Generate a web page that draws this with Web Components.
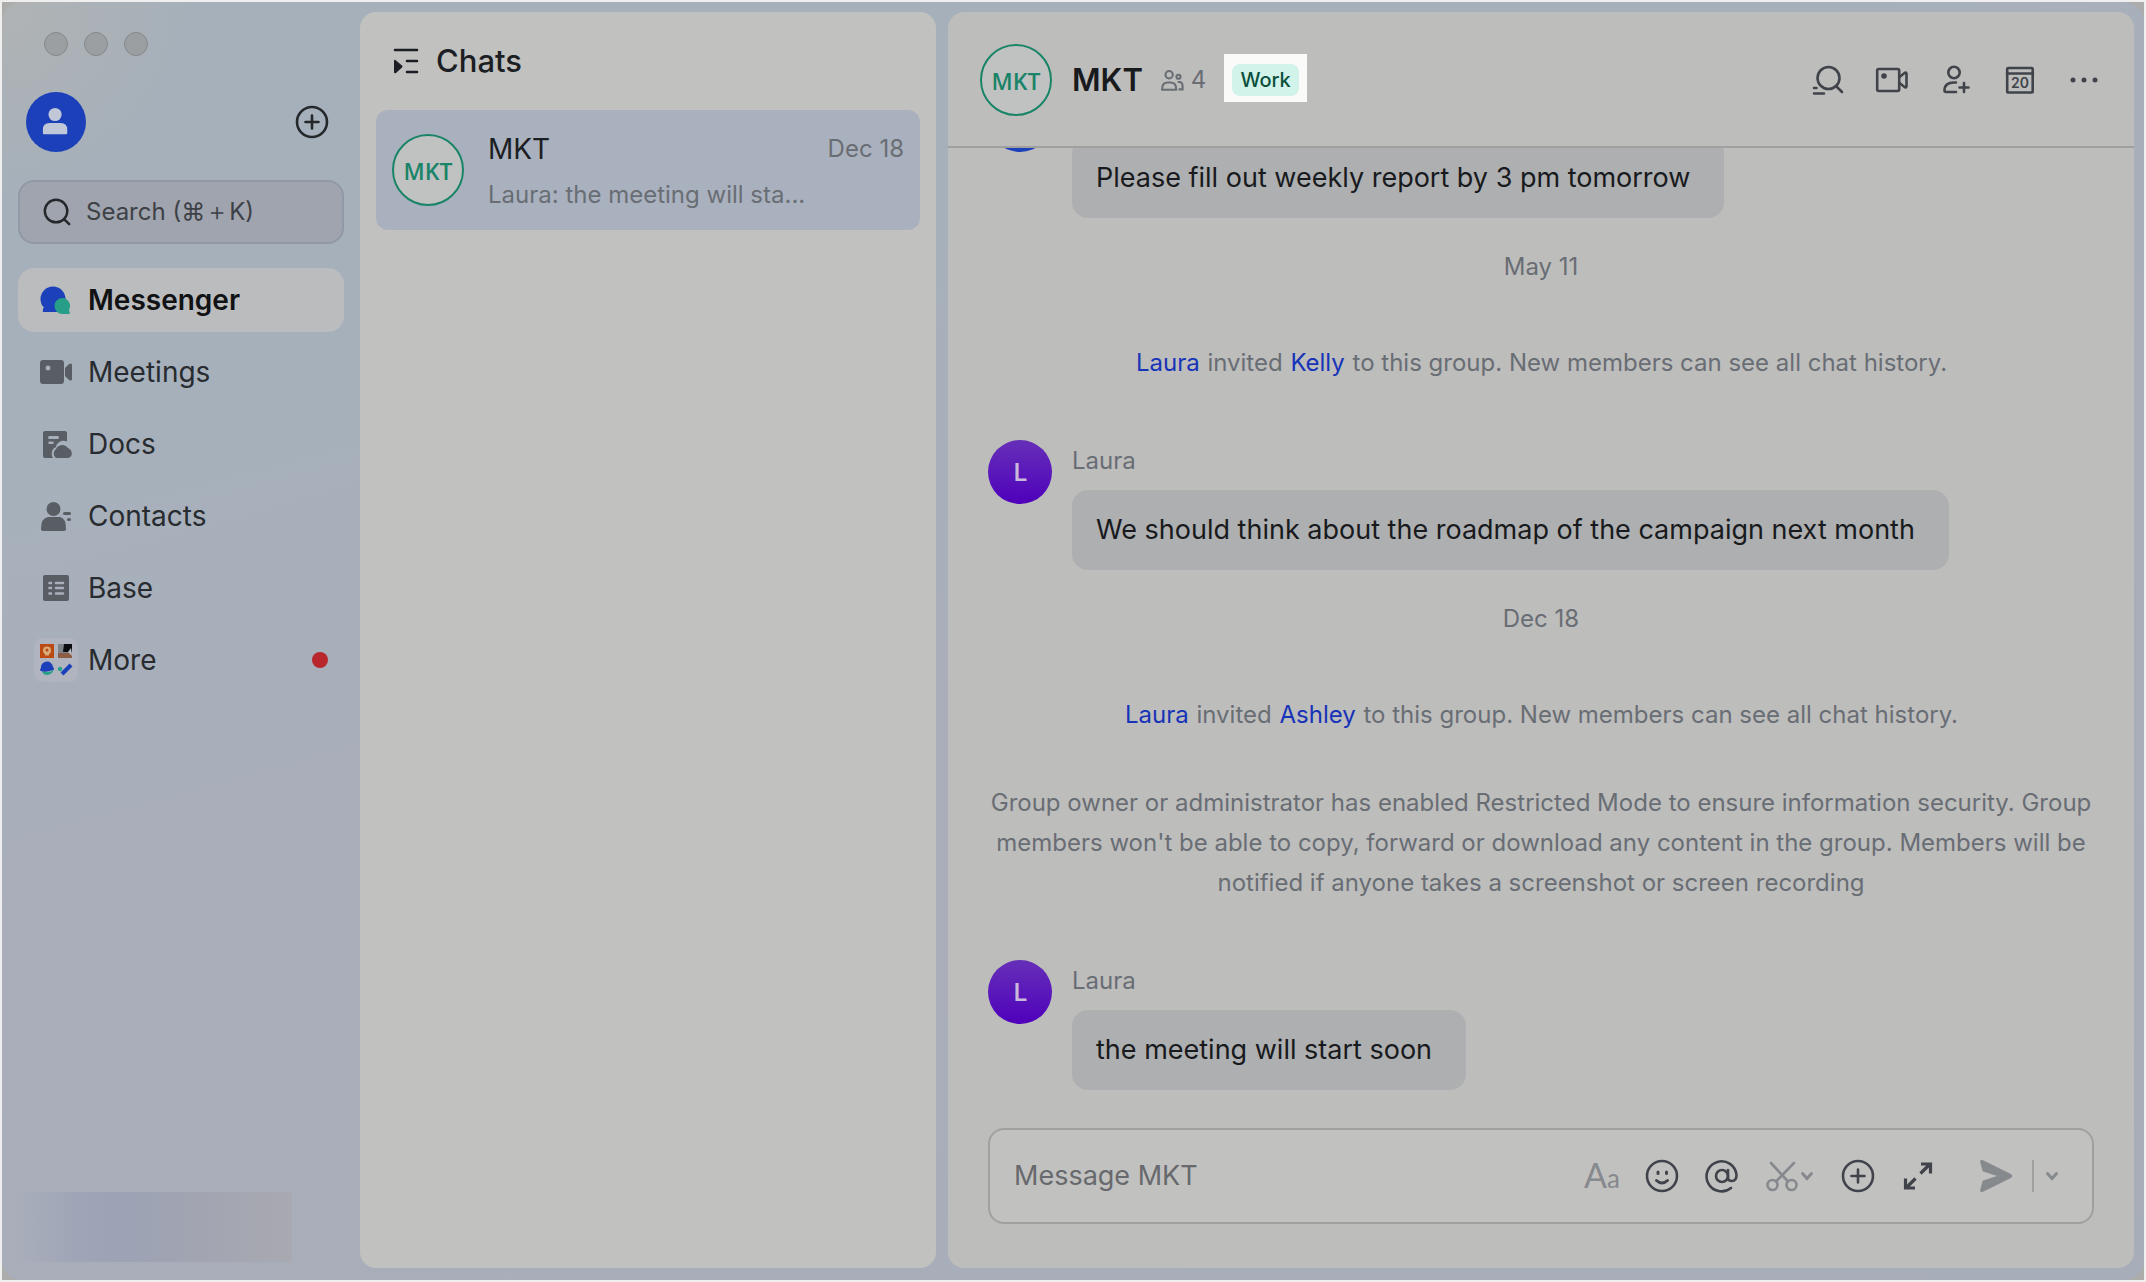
<!DOCTYPE html>
<html lang="en">
<head>
<meta charset="utf-8">
<title>Messenger</title>
<style>
html { height: 100%; background: #efefef; }
body {
    height: 100%;
    margin: 0;
    box-sizing: border-box;
    padding: 2px;
    background: #acacaa content-box;
    font-family: Inter, "Liberation Sans", sans-serif;
    font-size: 24px;
    line-height: 40px;
    color: #181a1d;
    --muted: #696d74;
    --icon: #40444a;
    --faint: #86898d;
    --line: #a0a09f;
    --link: #1733b8;
    --green: #1a8468;
}
</style>
</head>
<body>
<chat-app></chat-app>

<script>
const icons = {
    plus: '<circle cx="16" cy="16" r="15"/><path d="M16 9.500v13M9.500 16h13"/>',
    search: '<circle cx="15" cy="15" r="12"/><path d="M23.500 23.500l5.500 5.500"/>',
    messenger: '<g stroke="none"><circle cx="13" cy="15" r="12.500" fill="#1c3fba"/><path fill="#1c3fba" d="M3 24h14v4H4q-2 0-1-2z"/><path fill="#279e87" d="M22.500 14a8 8 0 1 0 0 16h6q2 0 1-2l-.5-2A8 8 0 0 0 22.500 14z"/></g>',
    meetings: '<g fill="currentColor" stroke="none"><path fill-rule="evenodd" d="M3 4h18a3 3 0 0 1 3 3v18a3 3 0 0 1-3 3H3a3 3 0 0 1-3-3V7a3 3 0 0 1 3-3zm5 5.500a2.500 2.500 0 1 0 .01 0z"/><path d="M25 12l4-4q3-1.500 3 1v14q0 2.500-3 1l-4-4z"/></g>',
    docs: '<g stroke="none" fill="currentColor"><path fill-rule="evenodd" d="M5 3h20a2 2 0 0 1 2 2v8.500c-5-2-10 .5-11 5.500-4 1.500-5.500 7-3 11H5a2 2 0 0 1-2-2V5a2 2 0 0 1 2-2zm4.500 5a1 1 0 0 0 0 3h8a1 1 0 0 0 0-3zm0 5.500a1 1 0 0 0 0 2.500h3a1 1 0 0 0 0-2.500z"/><path d="M16 30a5.500 5.500 0 0 1 0-9 7 7 0 0 1 12-1c5 2 5 9 .5 10z"/></g>',
    contacts: '<g stroke="none" fill="currentColor"><circle cx="13.500" cy="9" r="7"/><path d="M8 17h12q6 1 6 12 0 2-2 2H3q-2 0-2-2 0-11 7-12z"/><rect x="23" y="12" width="8" height="3" rx="1.500"/><rect x="27" y="18" width="4" height="3" rx="1.500"/></g>',
    base: '<path fill="currentColor" stroke="none" fill-rule="evenodd" d="M5 3h22a2 2 0 0 1 2 2v22a2 2 0 0 1-2 2H5a2 2 0 0 1-2-2V5a2 2 0 0 1 2-2z"/><path stroke="#a9b0bb" d="M9.500 11h1.500M16 11h7M9.500 16h1.500M16 16h7M9.500 21.500h1.500M16 21.500h7"/>',
    more: '<g stroke="none"><path fill="#bb4a13" d="M0 0h14v14H0z"/><circle cx="7" cy="6.500" r="4" fill="#d8ab78"/><path fill="#d8ab78" d="M5 9h4v2.500H5z"/><circle cx="7" cy="6" r="1.500" fill="#bb4a13"/><path fill="#7f8489" d="M18 0h14v14H18z"/><path fill="#0c0d10" d="M24 0h8v8h-9z"/><path fill="#8c5c45" d="M18 9h14v5H18z"/><path fill="#b9bcc0" d="M28 8l3-4 1 8z"/><path fill="#27a18a" d="M2 27q10 3 12-3-1 7-7 7-4 0-5-4z"/><path fill="#1c3fba" d="M1 24a6 6 0 0 1 12-1q2 2 0 3-7 3-12 1-2-1 0-3z"/><circle cx="20" cy="25" r="2.200" fill="#27a18a"/></g><path stroke="#1c3fba" stroke-width="4" stroke-linecap="butt" d="M22 30l9-9"/>',
    sidebar: '<path d="M5 5h22M17 16h10M17 27h10"/><path fill="currentColor" stroke="none" d="M4 16q0-2 2-.5l6 5q1 1 0 2l-6 5.500q-2 1-2-1z"/>',
    people: '<circle cx="12.500" cy="9.500" r="4.500"/><path d="M4 28v-2q0-7 7-7h3q7 0 7 7v2zM24 18.500h1q4 0 4 5v4h-4"/><circle cx="24" cy="12" r="2.500"/>',
    find: '<circle cx="16.500" cy="14" r="11"/><path d="M24 22l6 6M2 24h2.500M2 29.500h10"/>',
    video: '<rect x="1.200" y="5" width="22" height="22" rx="1.500"/><path d="M23.500 13l5-4q2-1 2 1v12q0 2-2 1l-5-4"/><circle cx="8" cy="12" r="2.800" fill="currentColor" stroke="none"/>',
    invite: '<circle cx="14" cy="8.500" r="5.700"/><path d="M16 18.500h-2q-9.500 0-9.500 8 0 1.500 1.500 1.500h10M24 19v9M19.500 23.500h9"/>',
    dots: '<g fill="currentColor" stroke="none"><circle cx="5" cy="16" r="2.500"/><circle cx="16" cy="16" r="2.500"/><circle cx="27" cy="16" r="2.500"/></g>',
    calendar: '<rect x="3.200" y="4" width="25.500" height="24.500" rx="1"/><path d="M3 9.500h26"/><text x="16" y="24" text-anchor="middle" font-family="Inter" font-weight="600" font-size="14" fill="currentColor" stroke="none">20</text>',
    smile: '<circle cx="16" cy="16" r="15"/><path stroke-width="3" d="M12 12v1.500M20.500 12v1.500M10.500 20.500q5.500 5 11 0"/>',
    at: '<circle cx="16" cy="16" r="6"/><path d="M22 10v8q0 3 4 3 4.500 0 4.500-6A15 15 0 1 0 25 28"/>',
    scissors: '<path d="M5 3l17 18.500M28 3L10 21.500"/><circle cx="6.500" cy="25" r="5"/><circle cx="25.500" cy="25" r="5"/>',
    chevron: '<path stroke-width="3" d="M11.500 13.500l4.500 5 4.500-5"/>',
    expand: '<path stroke-width="3.200" stroke-linecap="butt" d="M18.500 13.500L28 4M19 4h9.500v9.500M13.500 18.500L4 28M3.500 18.500V28H13"/>',
    send: '<path fill="currentColor" stroke-width="2" stroke-linejoin="round" d="M2 1q-1-.5-.8.700L3.500 10.500l14 4.500v2l-14 4.500L1.200 30.300q-.2 1.200.8.700l28.500-14q1.500-1 0-2z"/>',
    person: '<g fill="#bfc7d9" stroke="none"><circle cx="15" cy="8" r="7"/><path d="M2 28v-4q0-7 7-7h12q7 0 7 7v4q0 1-1 1H3q-1 0-1-1z"/></g>'
};

function define(name, html) {
    const template = document.createElement('template');
    template.innerHTML = html;
    customElements.define(name, class extends HTMLElement {
        constructor() {
            super();
            this.attachShadow({ mode: 'open' }).appendChild(template.content.cloneNode(true));
        }
    });
}

class ChatIcon extends HTMLElement {
    constructor() {
        super();
        this.attachShadow({ mode: 'open' });
    }

    connectedCallback() {
        this.shadowRoot.innerHTML = `
            <style>
            :host { display: block; flex: none; width: var(--size, 32px); height: var(--size, 32px); }
            svg { display: block; width: 100%; height: 100%; overflow: visible; }
            </style>
            <svg viewBox="0 0 32 32" fill="none" stroke="currentColor" stroke-width="2.600"
                stroke-linecap="round" aria-hidden="true">${icons[this.getAttribute('name')]}</svg>
        `;
    }
}
customElements.define('chat-icon', ChatIcon);

define('icon-button', `
    <style>
    :host { display: block; flex: none; }
    button { display: flex; align-items: center; margin: 0; padding: 0; border: 0; background: none; color: inherit; font: inherit; }
    </style>
    <button type="button"><slot></slot></button>
`);

define('group-avatar', `
    <style>
    :host {
        display: flex; flex: none; align-items: center; justify-content: center; box-sizing: border-box;
        width: 72px; height: 72px; padding-top: 2px; border: 2px solid var(--green); border-radius: 50%;
        background: #c0c1c1; color: var(--green); font: 600 23px/32px "Open Sans", sans-serif;
    }
    </style>
    <slot></slot>
`);

define('user-avatar', `
    <style>
    :host {
        display: flex; flex: none; align-items: center; justify-content: center; box-sizing: border-box;
        width: 64px; height: 64px; padding-bottom: 2px; border-radius: 50%;
        background: linear-gradient(#6630b8, #4f00bb); color: #c9b9dd; font: 600 26px/40px "Open Sans", sans-serif;
    }
    :host([plain]) { background: #1c3fba; }
    </style>
    <slot></slot>
`);

define('nav-item', `
    <style>
    :host { display: block; color: #282b2f; }
    a {
        display: flex; align-items: center; gap: 16px; height: 64px; padding: 0 16px 0 22px;
        border-radius: 16px; color: inherit; text-decoration: none; font-size: 28px;
    }
    :host([active]) { color: #111214; font-weight: 600; }
    :host([active]) a { background: #bbbcbe; }
    .icon { color: #595e65; }
    .label { flex: 1; }
    :host([tile]) .icon { margin: 0 -6px; padding: 6px; border-radius: 8px; background: #afb4be; }
    </style>
    <a href="#"><span class="icon"><slot name="icon"></slot></span><span class="label"><slot></slot></span><slot name="badge"></slot></a>
`);

define('side-bar', `
    <style>
    :host { display: flex; flex-direction: column; flex: none; width: 326px; padding: 30px 16px 18px; }
    .lights { display: flex; gap: 16px; padding-left: 26px; }
    .lights i { box-sizing: border-box; width: 24px; height: 24px; border: 1px solid #85888a; border-radius: 50%; background: #9b9fa1; }
    .me { display: flex; align-items: center; justify-content: space-between; margin-top: 36px; padding: 0 16px 0 8px; color: #25282b; }
    .face { display: flex; align-items: center; justify-content: center; width: 60px; height: 60px; border-radius: 50%; background: #1c3fba; --size: 30px; }
    label {
        display: flex; align-items: center; gap: 14px; box-sizing: border-box; height: 64px; margin-top: 28px;
        padding: 0 20px 0 22px; border: 2px solid #9299a6; border-radius: 16px; background: #9fa4af; color: #25282b;
    }
    label chat-icon { --size: 30px; }
    input { flex: 1; min-width: 0; padding: 0; border: 0; outline: 0; background: none; font: inherit; color: inherit; }
    input::placeholder { color: #3d4146; opacity: 1; }
    nav { display: flex; flex-direction: column; gap: 8px; margin-top: 24px; }
    .dot { width: 16px; height: 16px; border-radius: 50%; background: #b9272c; }
    .haze { width: 274px; height: 70px; margin-top: auto; background: linear-gradient(90deg, transparent, #9ea5b6 22%, #9ba3b5 36%, #a1a4b1 62%, #a8a9b1); }
    </style>
    <div class="lights"><i></i><i></i><i></i></div>
    <div class="me">
        <span class="face"><chat-icon name="person"></chat-icon></span>
        <icon-button><chat-icon name="plus"></chat-icon></icon-button>
    </div>
    <label><chat-icon name="search"></chat-icon><input type="text" aria-label="Search" placeholder="Search (⌘＋K)"></label>
    <nav>
        <nav-item active><chat-icon slot="icon" name="messenger"></chat-icon>Messenger</nav-item>
        <nav-item><chat-icon slot="icon" name="meetings"></chat-icon>Meetings</nav-item>
        <nav-item><chat-icon slot="icon" name="docs"></chat-icon>Docs</nav-item>
        <nav-item><chat-icon slot="icon" name="contacts"></chat-icon>Contacts</nav-item>
        <nav-item><chat-icon slot="icon" name="base"></chat-icon>Base</nav-item>
        <nav-item tile><chat-icon slot="icon" name="more"></chat-icon>More<i slot="badge" class="dot"></i></nav-item>
    </nav>
    <div class="haze"></div>
`);

define('chat-row', `
    <style>
    :host { display: flex; align-items: center; gap: 24px; height: 120px; padding: 0 16px; border-radius: 12px; background: #aab1be; }
    .text { flex: 1; min-width: 0; padding-top: 2px; }
    .top { display: flex; align-items: center; justify-content: space-between; line-height: 48px; }
    .name { font-size: 28px; color: #1b1e22; }
    .date, .last { color: var(--muted); }
    .last { line-height: 44px; padding-right: 80px; overflow: hidden; text-overflow: ellipsis; white-space: nowrap; }
    </style>
    <group-avatar>MKT</group-avatar>
    <div class="text">
        <div class="top"><span class="name"><slot name="name"></slot></span><span class="date"><slot name="date"></slot></span></div>
        <div class="last"><slot></slot></div>
    </div>
`);

define('chat-list', `
    <style>
    :host { display: block; flex: none; box-sizing: border-box; width: 576px; padding: 0 16px; border-radius: 16px; background: #c1c1c0; }
    header { display: flex; align-items: center; gap: 14px; height: 98px; padding-left: 14px; color: #1b1e22; }
    h2 { margin: 0; font-size: 31px; font-weight: 500; line-height: 40px; }
    </style>
    <header><icon-button><chat-icon name="sidebar"></chat-icon></icon-button><h2>Chats</h2></header>
    <chat-row><span slot="name">MKT</span><span slot="date">Dec 18</span>Laura: the meeting will sta...</chat-row>
`);

define('chat-header', `
    <style>
    :host {
        display: flex; align-items: center; flex: none; box-sizing: border-box; height: 136px;
        padding: 2px 34px 0 32px; border-bottom: 2px solid var(--line); color: var(--icon);
    }
    h1 { margin: 0 16px 0 20px; font-size: 31px; font-weight: 600; color: #181a1d; }
    .count { display: flex; align-items: center; gap: 6px; color: var(--muted); --size: 26px; }
    .spot { margin: 0 0 4px 18px; padding: 10px 8px 6px; background: #fafaf9; }
    .tag { display: block; padding: 0 8px; border-radius: 8px; background: #d2f3ea; color: #0c4f3c; font-size: 20px; font-weight: 500; line-height: 32px; }
    .tools { display: flex; gap: 32px; margin-left: auto; }
    </style>
    <group-avatar>MKT</group-avatar>
    <h1>MKT</h1>
    <span class="count"><chat-icon name="people"></chat-icon>4</span>
    <span class="spot"><span class="tag">Work</span></span>
    <div class="tools">
        <icon-button><chat-icon name="find"></chat-icon></icon-button>
        <icon-button><chat-icon name="video"></chat-icon></icon-button>
        <icon-button><chat-icon name="invite"></chat-icon></icon-button>
        <icon-button><chat-icon name="calendar"></chat-icon></icon-button>
        <icon-button><chat-icon name="dots"></chat-icon></icon-button>
    </div>
`);

define('chat-message', `
    <style>
    :host { display: flex; flex: none; align-items: flex-start; gap: 20px; }
    .name { min-height: 42px; margin-bottom: 8px; color: var(--muted); line-height: 42px; }
    .bubble { width: fit-content; padding: 20px 34px 20px 24px; border-radius: 16px; background: #aeafb0; font-size: 27px; }
    </style>
    <slot name="avatar"></slot>
    <div>
        <div class="name"><slot name="from"></slot></div>
        <div class="bubble"><slot></slot></div>
    </div>
`);

define('chat-note', `
    <style>
    :host { display: block; flex: none; margin-top: 56px; text-align: center; color: var(--muted); }
    :host([day]) { margin-top: 29px; }
    :host([notice]) { margin-top: 48px; }
    ::slotted(a) { margin: 0 1px; color: var(--link); text-decoration: none; }
    </style>
    <slot></slot>
`);

define('chat-log', `
    <style>
    :host { display: flex; flex: 1; flex-direction: column; justify-content: flex-end; min-height: 0; overflow: hidden; padding: 0 40px 38px; }
    chat-note + chat-message { margin-top: 57px; }
    </style>
    <chat-message><user-avatar plain slot="avatar"></user-avatar>Please fill out weekly report by 3 pm tomorrow</chat-message>
    <chat-note day>May 11</chat-note>
    <chat-note><a href="#">Laura</a> invited <a href="#">Kelly</a> to this group. New members can see all chat history.</chat-note>
    <chat-message><user-avatar slot="avatar">L</user-avatar><span slot="from">Laura</span>We should think about the roadmap of the campaign next month</chat-message>
    <chat-note day>Dec 18</chat-note>
    <chat-note><a href="#">Laura</a> invited <a href="#">Ashley</a> to this group. New members can see all chat history.</chat-note>
    <chat-note notice>Group owner or administrator has enabled Restricted Mode to ensure information security. Group members won't be able to copy, forward or download any content in the group. Members will be notified if anyone takes a screenshot or screen recording</chat-note>
    <chat-message><user-avatar slot="avatar">L</user-avatar><span slot="from">Laura</span>the meeting will start soon</chat-message>
`);

define('chat-composer', `
    <style>
    :host {
        display: flex; align-items: center; flex: none; gap: 28px; box-sizing: border-box; height: 96px; margin: 0 40px 44px;
        padding: 0 24px; border: 2px solid var(--line); border-radius: 16px; background: #c1c1c0; color: var(--icon);
    }
    input { flex: 1; min-width: 0; padding: 0; border: 0; outline: 0; background: none; font: inherit; font-size: 27px; color: inherit; }
    input::placeholder { color: #67696c; opacity: 1; }
    .faint { color: var(--faint); }
    .type { display: flex; align-items: baseline; margin-right: -2px; font: 34px/40px Lato, sans-serif; }
    .type small { font-size: 26px; }
    .cut { display: flex; align-items: center; }
    .cut chat-icon + chat-icon { margin: 0 -9px 0 -7px; }
    .send { margin-left: 18px; }
    .split { width: 2px; height: 32px; margin: 0 -26px 0 -8px; background: var(--line); }
    </style>
    <input type="text" aria-label="Message" placeholder="Message MKT">
    <icon-button class="faint"><span class="type">A<small>a</small></span></icon-button>
    <icon-button><chat-icon name="smile"></chat-icon></icon-button>
    <icon-button><chat-icon name="at"></chat-icon></icon-button>
    <icon-button class="faint"><span class="cut"><chat-icon name="scissors"></chat-icon><chat-icon name="chevron"></chat-icon></span></icon-button>
    <icon-button><chat-icon name="plus"></chat-icon></icon-button>
    <icon-button><chat-icon name="expand"></chat-icon></icon-button>
    <icon-button class="faint send"><chat-icon name="send"></chat-icon></icon-button>
    <span class="split"></span>
    <icon-button class="faint"><chat-icon name="chevron"></chat-icon></icon-button>
`);

define('chat-room', `
    <style>
    :host { display: flex; flex: 1; flex-direction: column; min-width: 0; overflow: hidden; border-radius: 16px; background: #bdbdbc; }
    </style>
    <chat-header></chat-header>
    <chat-log></chat-log>
    <chat-composer></chat-composer>
`);

define('chat-app', `
    <style>
    :host {
        display: flex; box-sizing: border-box; height: 100%; border-radius: 20px; overflow: hidden;
        background: radial-gradient(circle at 0 0, #b0b3b4, transparent 200px), linear-gradient(165deg, #a5b0ba 0, #a6b0bb 25%, #a9aeba 50%, #a8adba 100%);
    }
    .panels { display: flex; flex: 1; gap: 12px; min-width: 0; padding: 10px 10px 12px 0; }
    </style>
    <side-bar></side-bar>
    <div class="panels">
        <chat-list></chat-list>
        <chat-room></chat-room>
    </div>
`);
</script>
</body>
</html>
